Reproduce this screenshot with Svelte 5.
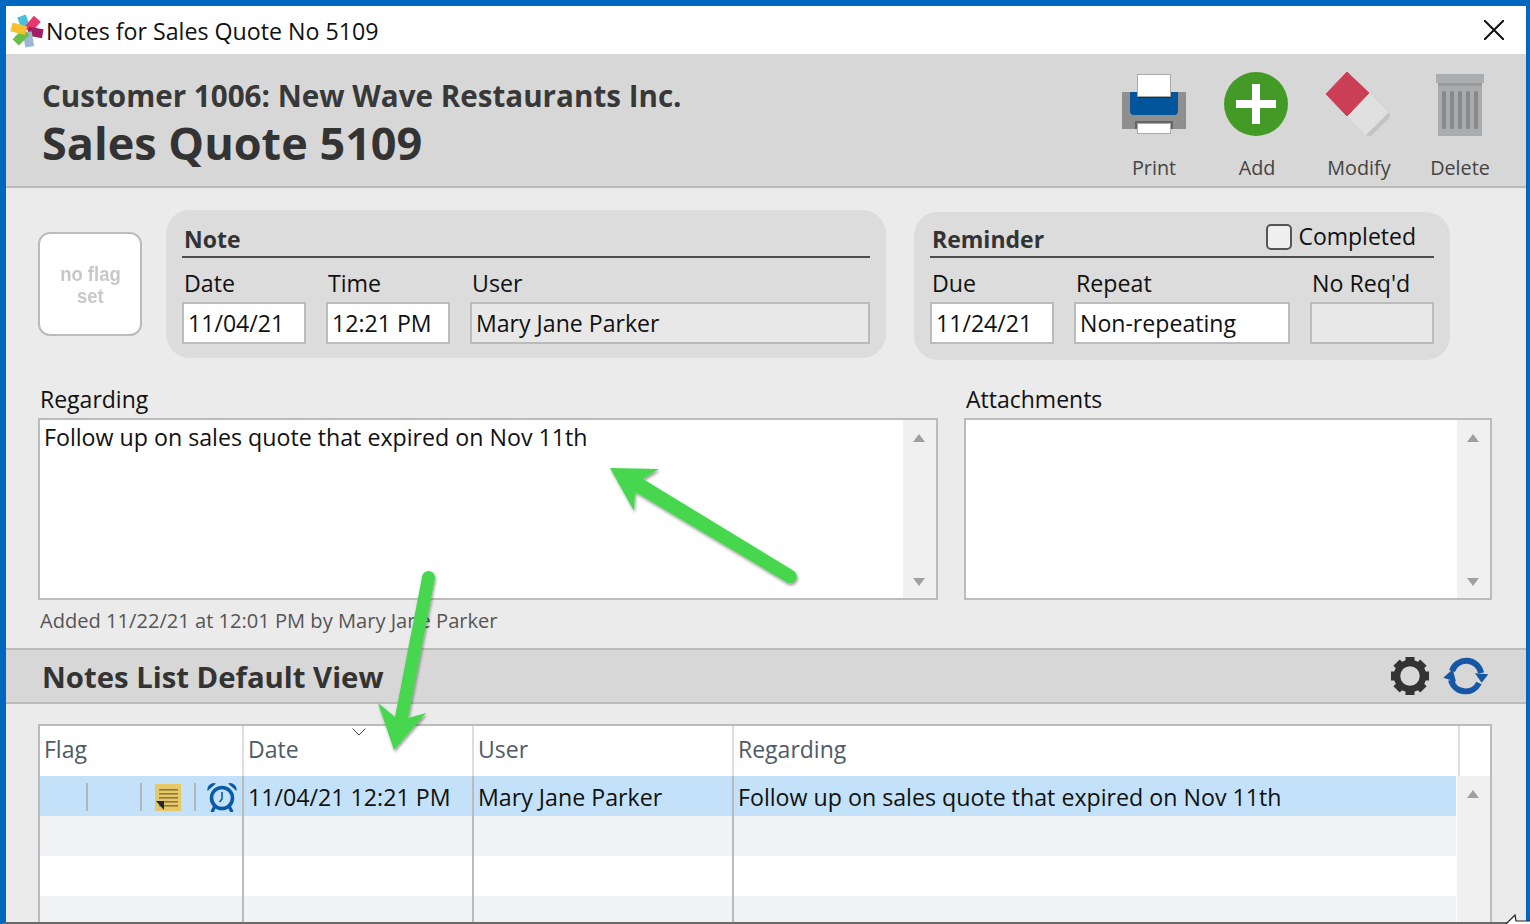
<script>
  const rows = [
    { date: '11/04/21 12:21 PM', user: 'Mary Jane Parker', regarding: 'Follow up on sales quote that expired on Nov 11th', tone: 'selected' },
    { tone: 'grey' },
    { tone: 'white' },
    { tone: 'grey' }
  ];
  const petals = [
    { angle: -20, color: '#4bbfdc' },
    { angle: 40, color: '#e8386f' },
    { angle: 100, color: '#a01f63' },
    { angle: 170, color: '#9fb6d6' },
    { angle: 225, color: '#6abf4b' },
    { angle: 285, color: '#fbc02d' }
  ];
  const teeth = [0, 45, 90, 135, 180, 225, 270, 315];
</script>

<div class="stage">
  <div class="window">
    <div class="titlebar">
      <svg class="logo" viewBox="0 0 36 36" width="36" height="36">
        {#each petals as p}
          <rect x="13.5" y="2" width="9" height="15" fill={p.color} transform="rotate({p.angle} 18 18)" />
        {/each}
      </svg>
      <span class="wintitle">Notes for Sales Quote No 5109</span>
      <svg class="close" viewBox="0 0 20 20" width="20" height="20">
        <path d="M0 0 L20 20 M20 0 L0 20" stroke="#111" stroke-width="2" />
      </svg>
    </div>

    <header class="head">
      <div class="head-text">
        <div class="customer">Customer 1006: New Wave Restaurants Inc.</div>
        <div class="quote">Sales Quote 5109</div>
      </div>
      <div class="actions">
        <div class="action print">
          <svg viewBox="0 0 70 64" width="70" height="64">
            <rect x="3" y="20" width="64" height="37" fill="#8f8f8f" />
            <path d="M11 20 H59 V39 a4 4 0 0 1 -4 4 H15 a4 4 0 0 1 -4 -4 Z" fill="#00559b" />
            <rect x="18" y="24" width="34" height="2" fill="#0b2f55" />
            <rect x="18.5" y="2.5" width="33" height="22" fill="#fff" stroke="#aaa" />
            <rect x="16" y="49" width="38" height="8" fill="#666" />
            <rect x="18.5" y="51.5" width="33" height="10" fill="#fff" stroke="#aaa" />
          </svg>
          <span>Print</span>
        </div>
        <div class="action">
          <svg viewBox="0 0 70 64" width="70" height="64">
            <circle cx="34" cy="32" r="32" fill="#439a26" />
            <path d="M14 28 H30 V12 H38 V28 H54 V36 H38 V52 H30 V36 H14 Z" fill="#fff" />
          </svg>
          <span>Add</span>
        </div>
        <div class="action">
          <svg viewBox="0 0 70 64" width="70" height="64">
            <path d="M45 21 L65 41 L42 63 L23 44 Z" fill="#e0e0e0" />
            <path d="M65 40 L66 45 L47 64 L42 63 Z" fill="#c4c4c4" />
            <path d="M23 0 L45 21 L23 44 L2 22 Z" fill="#cb3f56" stroke="#cb3f56" stroke-linejoin="round" />
          </svg>
          <span>Modify</span>
        </div>
        <div class="action del">
          <svg viewBox="0 0 70 64" width="70" height="64">
            <rect x="11" y="2" width="48" height="9" fill="#acadaf" />
            <rect x="13" y="11" width="44" height="53" fill="#aaabad" />
            <rect x="13" y="11" width="44" height="3" fill="#98999b" />
            {#each [17, 25, 33, 41, 49] as x}
              <rect {x} y="19" width="4" height="38" rx="1.5" fill="#88898b" />
            {/each}
          </svg>
          <span>Delete</span>
        </div>
      </div>
    </header>

    <main class="body">
      <div class="top-row">
        <div class="flag-box"><span>no flag<br />set</span></div>

        <section class="panel note">
          <div class="panel-title"><b>Note</b></div>
          <div class="fields">
            <label class="w124">Date<div class="input">11/04/21</div></label>
            <label class="w124">Time<div class="input">12:21 PM</div></label>
            <label class="w400">User<div class="input ro">Mary Jane Parker</div></label>
          </div>
        </section>

        <section class="panel reminder">
          <div class="panel-title">
            <b>Reminder</b>
            <span class="completed"><i class="check"></i>Completed</span>
          </div>
          <div class="fields">
            <label class="w124">Due<div class="input">11/24/21</div></label>
            <label class="w216">Repeat<div class="input">Non-repeating</div></label>
            <label class="w124">No Req'd<div class="input ro"></div></label>
          </div>
        </section>
      </div>

      <div class="memo-row">
        <div>
          <div class="memo-label">Regarding</div>
          <div class="memo">
            <div class="memo-text">Follow up on sales quote that expired on Nov 11th</div>
            <div class="scroll"><i class="up"></i><i class="down"></i></div>
          </div>
        </div>
        <div>
          <div class="memo-label">Attachments</div>
          <div class="memo">
            <div class="memo-text"></div>
            <div class="scroll"><i class="up"></i><i class="down"></i></div>
          </div>
        </div>
      </div>

      <div class="added">Added 11/22/21 at 12:01 PM by Mary Jane Parker</div>
    </main>

    <div class="list-bar">
      <h2>Notes List Default View</h2>
      <div class="list-tools">
        <svg viewBox="0 0 40 40" width="40" height="40">
          {#each teeth as t}
            <rect x="15.5" y="1" width="9" height="8" fill="#333" transform="rotate({t} 20 20)" />
          {/each}
          <circle cx="20" cy="20" r="13" fill="none" stroke="#333" stroke-width="6.5" />
        </svg>
        <svg viewBox="0 0 48 40" width="48" height="40">
          <path d="M10 15 A15 15 0 0 1 39 17" fill="none" stroke="#1557a5" stroke-width="6" />
          <path d="M46.3 18.3 L33 17.3 L39.7 26.7 Z" fill="#1557a5" />
          <path d="M37 27 A15 15 0 0 1 9 24" fill="none" stroke="#1557a5" stroke-width="6" />
          <path d="M1.3 21.7 L14 25.7 L10.7 13.3 Z" fill="#1557a5" />
        </svg>
      </div>
    </div>

    <div class="table-wrap">
      <div class="table">
        <div class="thead">
          <div class="th">Flag</div>
          <div class="th sorted">Date
            <svg class="chev" viewBox="0 0 14 8" width="14" height="8"><path d="M0.5 0.5 L7 7 L13.5 0.5" fill="none" stroke="#444" /></svg>
          </div>
          <div class="th">User</div>
          <div class="th">Regarding</div>
          <div class="th last"></div>
        </div>
        {#each rows as row, i}
          <div class="tr">
            <div class="td flag {row.tone}">
              {#if row.date}
                <i class="sep"></i><i class="sep"></i>
                <svg viewBox="0 0 26 27" width="26" height="27">
                  <rect width="26" height="27" fill="#e6c869" />
                  {#each [5, 9, 13, 17, 21] as y}
                    <rect x="4" {y} width="19" height="1.6" fill="#8a7a3a" />
                  {/each}
                  <path d="M1 17 H9 V26 Z" fill="#22262e" />
                </svg>
                <i class="sep"></i>
                <svg class="clock" viewBox="0 0 30 30" width="30" height="30">
                  <circle cx="15" cy="16" r="10.5" fill="none" stroke="#0b5aa7" stroke-width="3.6" />
                  <path d="M0.5 9 A6.5 6.5 0 0 1 9 1.5 Z M29.5 9 A6.5 6.5 0 0 0 21 1.5 Z" fill="#0b5aa7" />
                  <path d="M15 10 V17 L12.5 20" fill="none" stroke="#0b5aa7" stroke-width="1.6" />
                  <path d="M8 24 L5.5 29 M22 24 L24.5 29" stroke="#0b5aa7" stroke-width="3.4" stroke-linecap="round" />
                </svg>
              {/if}
            </div>
            <div class="td {row.tone}">{row.date ?? ''}</div>
            <div class="td {row.tone}">{row.user ?? ''}</div>
            <div class="td {row.tone}">{row.regarding ?? ''}</div>
            <div class="td-scroll">
              {#if i === 0}<i class="up"></i>{/if}
            </div>
          </div>
        {/each}
      </div>
    </div>
  </div>

  <!-- annotation arrows and the resize grip sit over the whole window -->
  <svg class="overlay" viewBox="0 0 1530 924" width="1530" height="924">
    <defs>
      <filter id="arrow-shadow" x="-10%" y="-10%" width="120%" height="120%">
        <feDropShadow dx="1" dy="2" stdDeviation="1.5" flood-color="#000" flood-opacity="0.4" />
      </filter>
    </defs>
    <g fill="#47d750" filter="url(#arrow-shadow)">
      <path d="M610 468 L659 469 L643 479 L794 571 A6.5 6.5 0 0 1 786 582 L635 492 L634 511 Z" />
      <path d="M394 750 L378 703 L395 717 L422 577 A6.5 6.5 0 0 1 435 578 L408 718 L426 713 Z" />
    </g>
    <path d="M1506 924 L1515 915 L1516 921 H1530 V924 Z" fill="#fff" />
    <path d="M1506 924 L1515 915 L1516 921 H1530" fill="none" stroke="#222" stroke-width="1.2" />
  </svg>
</div>

<style>
  :global(body) {
    margin: 0;
    background: #ebebeb;
  }

  .stage {
    position: relative;
    width: 1530px;
    height: 924px;
    overflow: hidden;
  }

  .window {
    box-sizing: border-box;
    width: 1530px;
    height: 924px;
    overflow: hidden;
    background: #ebebeb;
    border-style: solid;
    border-color: #0067c0 #0067c0 #6a6a6a #0067c0;
    border-width: 6px 4px 2px 6px;
    font-family: 'Open Sans', sans-serif;
    color: #111;
  }

  .titlebar {
    display: flex;
    align-items: center;
    height: 48px;
    background: #fff;
    padding-right: 22px;
  }

  .logo {
    margin: 1px 0 0 3px;
  }

  .wintitle {
    flex: 1;
    margin: 2px 0 0 1px;
    font-size: 23.2px;
    color: #111;
  }

  .head {
    box-sizing: border-box;
    display: flex;
    justify-content: space-between;
    height: 134px;
    background: #d7d7d7;
    border-bottom: 2px solid #bbb;
    padding: 18px 16px 0 36px;
  }

  .customer {
    margin-top: 5px;
    font-size: 29.6px;
    font-weight: 700;
    line-height: 38px;
    color: #383838;
  }

  .quote {
    font-size: 45px;
    font-weight: 700;
    line-height: 56px;
    color: #333;
  }

  .actions {
    display: flex;
  }

  .action {
    display: flex;
    flex-direction: column;
    align-items: center;
    width: 102px;
    font-size: 19.8px;
    color: #444;
  }

  .action.print {
    width: 104px;
  }

  .action.del {
    width: 100px;
  }

  .action span {
    margin-top: 18px;
    line-height: 28px;
  }

  .body {
    padding: 22px 34px 0 32px;
  }

  .top-row {
    display: flex;
    align-items: flex-start;
  }

  .flag-box {
    box-sizing: border-box;
    display: flex;
    align-items: center;
    justify-content: center;
    width: 104px;
    height: 104px;
    margin: 22px 24px 0 0;
    background: #fff;
    border: 2px solid #bbb;
    border-radius: 12px;
    text-align: center;
    font-family: 'Liberation Sans', sans-serif;
    font-size: 21px;
    font-weight: 700;
    line-height: 22px;
    color: #c8c8c8;
  }

  .flag-box span {
    transform: scaleX(0.88);
    margin-top: 2px;
  }

  .panel {
    box-sizing: border-box;
    background: #dcdcdc;
    border-radius: 24px;
    padding: 0 16px;
  }

  .note {
    width: 720px;
    height: 148px;
    margin-right: 28px;
  }

  .reminder {
    width: 536px;
    height: 148px;
    margin-top: 2px;
  }

  .panel-title {
    box-sizing: border-box;
    display: flex;
    justify-content: space-between;
    align-items: flex-end;
    border-bottom: 2px solid #4d4d4d;
    padding: 0 18px 1px 2px;
    font-size: 23px;
    line-height: 32px;
    color: #333;
  }

  .note .panel-title {
    height: 48px;
  }

  .reminder .panel-title {
    height: 46px;
  }

  .panel-title b {
    font-weight: 700;
  }

  .completed {
    display: flex;
    align-items: center;
    position: relative;
    top: -3px;
    color: #111;
    font-size: 23px;
  }

  .check {
    box-sizing: border-box;
    width: 26px;
    height: 26px;
    margin: 1px 6px 0 0;
    background: #efefef;
    border: 2px solid #555;
    border-radius: 5px;
  }

  .fields {
    display: flex;
    gap: 20px;
  }

  .fields label {
    display: block;
    padding-top: 7px;
    font-size: 23.2px;
    line-height: 36px;
  }

  .fields label:nth-child(n) {
    text-indent: 2px;
  }

  .w124 { width: 124px; }
  .w216 { width: 216px; }
  .w400 { width: 400px; }

  .input {
    box-sizing: border-box;
    height: 42px;
    margin-top: 1px;
    background: #fff;
    border: 2px solid #bbb;
    padding-left: 2px;
    font-size: 23.1px;
    line-height: 38px;
    white-space: nowrap;
  }

  .input.ro {
    background: #e8e8e8;
  }

  .memo-row {
    display: grid;
    grid-template-columns: 900px 528px;
    gap: 26px;
    margin-top: 22px;
  }

  .memo-label {
    padding-left: 2px;
    font-size: 23px;
    line-height: 34px;
    height: 36px;
  }

  .memo {
    box-sizing: border-box;
    display: flex;
    height: 182px;
    background: #fff;
    border: 2px solid #bbb;
  }

  .memo-text {
    flex: 1;
    padding-left: 4px;
    font-size: 23.2px;
    line-height: 34px;
  }

  .scroll {
    position: relative;
    width: 33px;
    background: #f0f0f0;
  }

  .up,
  .down {
    position: absolute;
    left: 10px;
    width: 0;
    height: 0;
    border-left: 6px solid transparent;
    border-right: 6px solid transparent;
  }

  .up {
    top: 14px;
    border-bottom: 8px solid #a0a0a0;
  }

  .down {
    bottom: 12px;
    border-top: 8px solid #a0a0a0;
  }

  .added {
    margin-top: 6px;
    padding-left: 2px;
    font-size: 20.1px;
    line-height: 30px;
    color: #555;
  }

  .list-bar {
    box-sizing: border-box;
    display: flex;
    justify-content: space-between;
    align-items: center;
    height: 56px;
    margin-top: 12px;
    background: #d7d7d7;
    border: solid #bbb;
    border-width: 2px 0;
    padding: 0 36px;
  }

  h2 {
    margin: 2px 0 0;
    font-size: 29.3px;
    font-weight: 700;
    color: #333;
  }

  .list-tools {
    display: flex;
    align-items: center;
    gap: 12px;
  }

  .table-wrap {
    padding: 20px 34px 0 32px;
  }

  .table {
    box-sizing: border-box;
    background: #fff;
    border: 2px solid #bbb;
    border-bottom: 0;
  }

  .thead,
  .tr {
    display: grid;
    grid-template-columns: 204px 230px 260px 722px 34px;
  }

  .thead {
    height: 50px;
  }

  .th {
    position: relative;
    border-right: 2px solid #ddd;
    padding-left: 4px;
    font-size: 23px;
    line-height: 46px;
    color: #4f5b68;
  }

  .th.last {
    border-right: 0;
    border-left: 2px solid #ddd;
    margin-left: 2px;
  }

  .th:nth-child(4) {
    border-right: 0;
  }

  .chev {
    position: absolute;
    top: 2px;
    right: 106px;
  }

  .tr {
    height: 40px;
  }

  .td {
    box-sizing: border-box;
    border-right: 2px solid #bbb;
    padding-left: 4px;
    font-size: 23.2px;
    line-height: 42px;
    white-space: nowrap;
  }

  .td:nth-child(4) {
    border-right: 0;
  }

  .selected { background: #c3e2fa; }
  .grey { background: #f1f2f4; }
  .white { background: #fff; }

  .td.flag {
    display: flex;
    align-items: center;
    padding-left: 46px;
  }

  .sep {
    flex: none;
    width: 2px;
    height: 28px;
    margin-right: 52px;
    background: #b5b5b5;
  }

  .td.flag svg {
    flex: none;
    margin-left: -39px;
    margin-right: 13px;
  }

  .td.flag .clock {
    margin-left: -41px;
    margin-right: 0;
  }

  .td-scroll {
    position: relative;
    background: #f0f0f0;
    border-left: 1px solid #fff;
  }

  .td-scroll .up {
    left: 10px;
    top: 14px;
  }

  .overlay {
    position: absolute;
    top: 0;
    left: 0;
    pointer-events: none;
  }
</style>
